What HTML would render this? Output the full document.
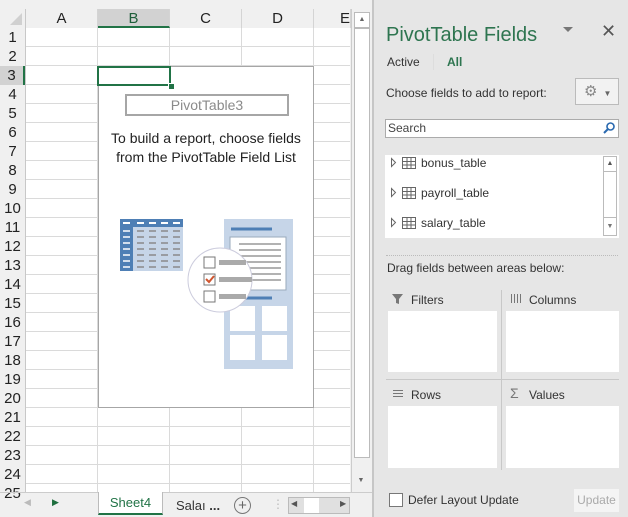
<!DOCTYPE html><html><head><style>
body{margin:0;width:628px;height:517px;overflow:hidden;font-family:"Liberation Sans",sans-serif;background:#e6e6e6;position:relative}
.a{position:absolute}
.rh{position:absolute;left:0;width:25px;text-align:center;font-size:15px;color:#222;background:#f0f0f0}
.ch{position:absolute;top:9px;height:19px;text-align:center;font-size:15px;color:#222;line-height:19px;background:#f0f0f0;border-right:1px solid #d4d4d4}
.p{font-family:"Liberation Sans","DejaVu Sans",sans-serif;font-size:12px;color:#333}
</style></head><body>
<div class="a" style="left:0;top:0;width:372px;height:517px;background:#f0f0f0"></div>
<div class="a" style="left:26px;top:28px;width:324px;height:464px;background:#fff;
background-image:linear-gradient(to right,#dadada 1px,transparent 1px),linear-gradient(to bottom,#dadada 1px,transparent 1px);
background-size:72px 19px;background-position:-1px -1px"></div>
<div class="ch" style="left:26px;width:71px">A</div>
<div class="ch" style="left:98px;width:71px;background:#d2d2d2;color:#1e5e3a;border-bottom:2px solid #217346;height:17px">B</div>
<div class="ch" style="left:170px;width:71px">C</div>
<div class="ch" style="left:242px;width:71px">D</div>
<div class="ch" style="left:314px;width:36px;text-align:right">E</div>
<div class="a" style="left:0;top:9px;width:25px;height:19px;background:#f0f0f0"><div style="position:absolute;right:3px;bottom:3px;border-left:12px solid transparent;border-bottom:12px solid #d0d0d0"></div></div>
<div class="a" style="left:25px;top:9px;width:1px;height:483px;background:#c8c8c8"></div>
<div id="rows"></div>
<script>
var h='';for(var i=1;i<=25;i++){var t=28+(i-1)*19;h+='<div class="rh" style="top:'+t+'px;height:19px;line-height:19px;'+(i==3?'background:#d2d2d2;border-right:2px solid #217346;width:23px;':'')+'">'+i+'</div>';}
document.getElementById('rows').innerHTML=h;
</script>
<div class="a" style="left:98px;top:66px;width:216px;height:342px;background:#fff;border:1px solid #a6a6a6;box-sizing:border-box"></div>
<div class="a" style="left:97px;top:66px;width:74px;height:20px;border:2px solid #217346;box-sizing:border-box"></div>
<div class="a" style="left:168px;top:83px;width:5px;height:5px;background:#217346;border:1px solid #fff"></div>
<div class="a" style="left:125px;top:94px;width:164px;height:22px;border:2px solid #a6a6a6;box-sizing:border-box;text-align:center;font-size:14px;line-height:18px;color:#8a8a8a">PivotTable3</div>
<div class="a" style="left:100px;top:129px;width:212px;text-align:center;font-size:14px;line-height:19px;color:#222">To build a report, choose fields<br>from the PivotTable Field List</div>
<svg class="a" style="left:100px;top:200px" width="200" height="180">
<rect x="20" y="19" width="63" height="52" fill="#c6d5e8"/>
<rect x="20" y="19" width="63" height="8" fill="#4e7fb5"/>
<rect x="20" y="19" width="13" height="52" fill="#4e7fb5"/>
<g stroke="#fff" stroke-width="2"><line x1="23" y1="23" x2="30" y2="23"/><line x1="37" y1="23" x2="44" y2="23"/><line x1="49" y1="23" x2="56" y2="23"/><line x1="61" y1="23" x2="68" y2="23"/><line x1="73" y1="23" x2="80" y2="23"/></g>
<g stroke="#fff" stroke-width="1.5"><line x1="23" y1="31" x2="30" y2="31"/><line x1="23" y1="37" x2="30" y2="37"/><line x1="23" y1="43" x2="30" y2="43"/><line x1="23" y1="49" x2="30" y2="49"/><line x1="23" y1="55" x2="30" y2="55"/><line x1="23" y1="61" x2="30" y2="61"/><line x1="23" y1="67" x2="30" y2="67"/></g>
<g stroke="#8a8a8a" stroke-width="1.5" stroke-dasharray="7,5"><line x1="37" y1="31" x2="82" y2="31"/><line x1="37" y1="37" x2="82" y2="37"/><line x1="37" y1="43" x2="82" y2="43"/><line x1="37" y1="49" x2="82" y2="49"/><line x1="37" y1="55" x2="82" y2="55"/><line x1="37" y1="61" x2="82" y2="61"/><line x1="37" y1="67" x2="82" y2="67"/></g>
<rect x="124" y="19" width="69" height="150" fill="#c6d5e8"/>
<line x1="131" y1="29" x2="172" y2="29" stroke="#4e7fb5" stroke-width="3"/>
<line x1="131" y1="98" x2="172" y2="98" stroke="#4e7fb5" stroke-width="3"/>
<rect x="130" y="37" width="56" height="53" fill="#fff" stroke="#9ab"/>
<g stroke="#999" stroke-width="1.5"><line x1="139" y1="44" x2="181" y2="44"/><line x1="139" y1="50" x2="181" y2="50"/><line x1="139" y1="56" x2="181" y2="56"/><line x1="139" y1="62" x2="181" y2="62"/><line x1="139" y1="68" x2="181" y2="68"/><line x1="139" y1="74" x2="181" y2="74"/><line x1="139" y1="80" x2="181" y2="80"/></g>
<g fill="#fff"><rect x="130" y="106" width="25" height="25"/><rect x="162" y="106" width="25" height="25"/><rect x="130" y="135" width="25" height="25"/><rect x="162" y="135" width="25" height="25"/></g>
<circle cx="120" cy="80" r="32" fill="#fff" stroke="#ccd" />
<g fill="#fff" stroke="#777"><rect x="104" y="57" width="11" height="11"/><rect x="104" y="74" width="11" height="11"/><rect x="104" y="91" width="11" height="11"/></g>
<g fill="#aaa"><rect x="119" y="60" width="27" height="5"/><rect x="119" y="77" width="33" height="5"/><rect x="119" y="94" width="27" height="5"/></g>
<path d="M106 79 L109 82 L114 76" stroke="#d0552f" stroke-width="2" fill="none"/>
</svg>
<div class="a" style="left:351px;top:9px;width:19px;height:483px;background:#f0f0f0;border-left:1px solid #ccc"></div>
<div class="a" style="left:354px;top:12px;width:14px;height:14px;background:#fff;border:1px solid #bbb;font-size:7px;color:#666;text-align:center;line-height:14px">▲</div>
<div class="a" style="left:354px;top:28px;width:14px;height:428px;background:#fff;border:1px solid #bbb"></div>
<div class="a" style="left:354px;top:474px;width:14px;height:14px;font-size:7px;color:#666;text-align:center;line-height:14px">▼</div>
<div class="a" style="left:0;top:492px;width:372px;height:1px;background:#ccc"></div>
<div class="a" style="left:24px;top:497px;font-size:9px;color:#bbb">◀</div>
<div class="a" style="left:52px;top:497px;font-size:9px;color:#1e6e3e">▶</div>
<div class="a" style="left:98px;top:492px;width:65px;height:23px;background:#fff;border-left:1px solid #bbb;border-right:1px solid #bbb;border-bottom:2px solid #217346;box-sizing:border-box;text-align:center;font-size:13px;line-height:21px;color:#217346">Sheet4</div>
<div class="a p" style="left:176px;top:498px;font-size:13px;color:#333">Salaı <b>...</b></div>
<div class="a" style="left:234px;top:497px;width:15px;height:15px;border:1.5px solid #777;border-radius:50%;text-align:center;line-height:15px;font-size:15px;color:#666">+</div>
<div class="a" style="left:272px;top:497px;color:#bbb;font-size:12px">⋮</div>
<div class="a" style="left:288px;top:497px;width:60px;height:15px;background:#e0e0e0;border:1px solid #bbb"></div>
<div class="a" style="left:304px;top:498px;width:15px;height:15px;background:#fff"></div>
<div class="a" style="left:291px;top:499px;font-size:8px;color:#555">◀</div>
<div class="a" style="left:340px;top:499px;font-size:8px;color:#555">▶</div>
<div class="a" style="left:372px;top:0;width:2px;height:517px;background:#c6c6c6"></div>
<div class="a" style="left:386px;top:24px;font-size:20px;color:#2e7550;font-family:'Liberation Sans','DejaVu Sans',sans-serif">PivotTable Fields</div>
<div class="a" style="left:563px;top:27px;border-left:5px solid transparent;border-right:5px solid transparent;border-top:5px solid #777"></div>
<div class="a" style="left:601px;top:21px;font-size:18px;color:#555">✕</div>
<div class="a p" style="left:387px;top:55px">Active</div>
<div class="a" style="left:433px;top:54px;width:1px;height:16px;background:#ddd"></div>
<div class="a p" style="left:447px;top:55px;font-weight:bold;color:#2e7550">All</div>
<div class="a p" style="left:386px;top:86px">Choose fields to add to report:</div>
<div class="a" style="left:575px;top:78px;width:44px;height:27px;border:1px solid #bbb;background:#f2f2f2;box-sizing:border-box;color:#888;font-size:15px;line-height:25px;padding-left:8px">⚙<span style="font-size:8px;margin-left:6px;color:#666">▼</span></div>
<div class="a" style="left:385px;top:119px;width:234px;height:19px;background:#fff;border:1px solid #ababab;box-sizing:border-box"></div>
<div class="a p" style="left:388px;top:121px;color:#444">Search</div>
<svg class="a" style="left:602px;top:121px" width="14" height="14"><circle cx="8.5" cy="5.5" r="3.5" fill="none" stroke="#2b6ab0" stroke-width="1.6"/><line x1="6" y1="8" x2="2" y2="12" stroke="#2b6ab0" stroke-width="2"/></svg>
<div class="a" style="left:385px;top:155px;width:234px;height:83px;background:#fff"></div>
<div class="a" style="left:603px;top:156px;width:14px;height:80px;border:1px solid #bbb;box-sizing:border-box;background:#fff"></div>
<div class="a" style="left:603px;top:156px;width:14px;height:15px;border-bottom:1px solid #bbb;font-size:7px;text-align:center;line-height:15px;color:#555">▲</div>
<div class="a" style="left:603px;top:217px;width:14px;height:18px;border-top:1px solid #bbb;font-size:7px;text-align:center;line-height:18px;color:#777">▼</div>
<svg class="a" style="left:388px;top:155px" width="120" height="80">
<g fill="none" stroke="#666"><path d="M3.5 3.5 L7.5 7.5 L3.5 11.5Z"/><path d="M3.5 33.5 L7.5 37.5 L3.5 41.5Z"/><path d="M3.5 63.5 L7.5 67.5 L3.5 71.5Z"/></g>
<g fill="none" stroke="#666"><rect x="14.5" y="2.5" width="13" height="11"/><rect x="14.5" y="32.5" width="13" height="11"/><rect x="14.5" y="62.5" width="13" height="11"/>
<path d="M14.5 6.5h13M14.5 10h13M19 2.5v11M23 2.5v11M14.5 36.5h13M14.5 40h13M19 32.5v11M23 32.5v11M14.5 66.5h13M14.5 70h13M19 62.5v11M23 62.5v11"/></g>
</svg>
<div class="a p" style="left:421px;top:156px">bonus_table</div>
<div class="a p" style="left:421px;top:186px">payroll_table</div>
<div class="a p" style="left:421px;top:216px">salary_table</div>
<div class="a" style="left:386px;top:255px;width:232px;border-top:1px dotted #bbb"></div>
<div class="a p" style="left:387px;top:261px">Drag fields between areas below:</div>
<div class="a" style="left:501px;top:290px;width:1px;height:180px;background:#c8c8c8"></div>
<div class="a" style="left:386px;top:379px;width:233px;height:1px;background:#c8c8c8"></div>
<svg class="a" style="left:391px;top:293px" width="14" height="12"><path d="M1 1h11l-4 5v5l-3-1v-4z" fill="#777"/></svg>
<div class="a p" style="left:411px;top:293px">Filters</div>
<svg class="a" style="left:510px;top:293px" width="12" height="11"><g stroke="#777"><line x1="1.5" y1="1" x2="1.5" y2="10"/><line x1="4.5" y1="1" x2="4.5" y2="10"/><line x1="7.5" y1="1" x2="7.5" y2="10"/><line x1="10.5" y1="1" x2="10.5" y2="10"/></g></svg>
<div class="a p" style="left:529px;top:293px">Columns</div>
<div class="a" style="left:388px;top:311px;width:109px;height:61px;background:#fff"></div>
<div class="a" style="left:506px;top:311px;width:113px;height:61px;background:#fff"></div>
<svg class="a" style="left:393px;top:389px" width="12" height="10"><g stroke="#777"><line x1="0" y1="1.5" x2="10" y2="1.5"/><line x1="0" y1="4.5" x2="10" y2="4.5"/><line x1="0" y1="7.5" x2="10" y2="7.5"/></g></svg>
<div class="a p" style="left:411px;top:388px">Rows</div>
<div class="a" style="left:510px;top:385px;font-size:14px;color:#777">Σ</div>
<div class="a p" style="left:529px;top:388px">Values</div>
<div class="a" style="left:388px;top:406px;width:109px;height:62px;background:#fff"></div>
<div class="a" style="left:506px;top:406px;width:113px;height:62px;background:#fff"></div>
<div class="a" style="left:389px;top:493px;width:12px;height:12px;background:#fff;border:1px solid #777"></div>
<div class="a p" style="left:408px;top:493px">Defer Layout Update</div>
<div class="a" style="left:574px;top:489px;width:45px;height:23px;background:#f4f4f4;text-align:center;line-height:23px;font-size:12px;color:#aaa">Update</div>
</body></html>
